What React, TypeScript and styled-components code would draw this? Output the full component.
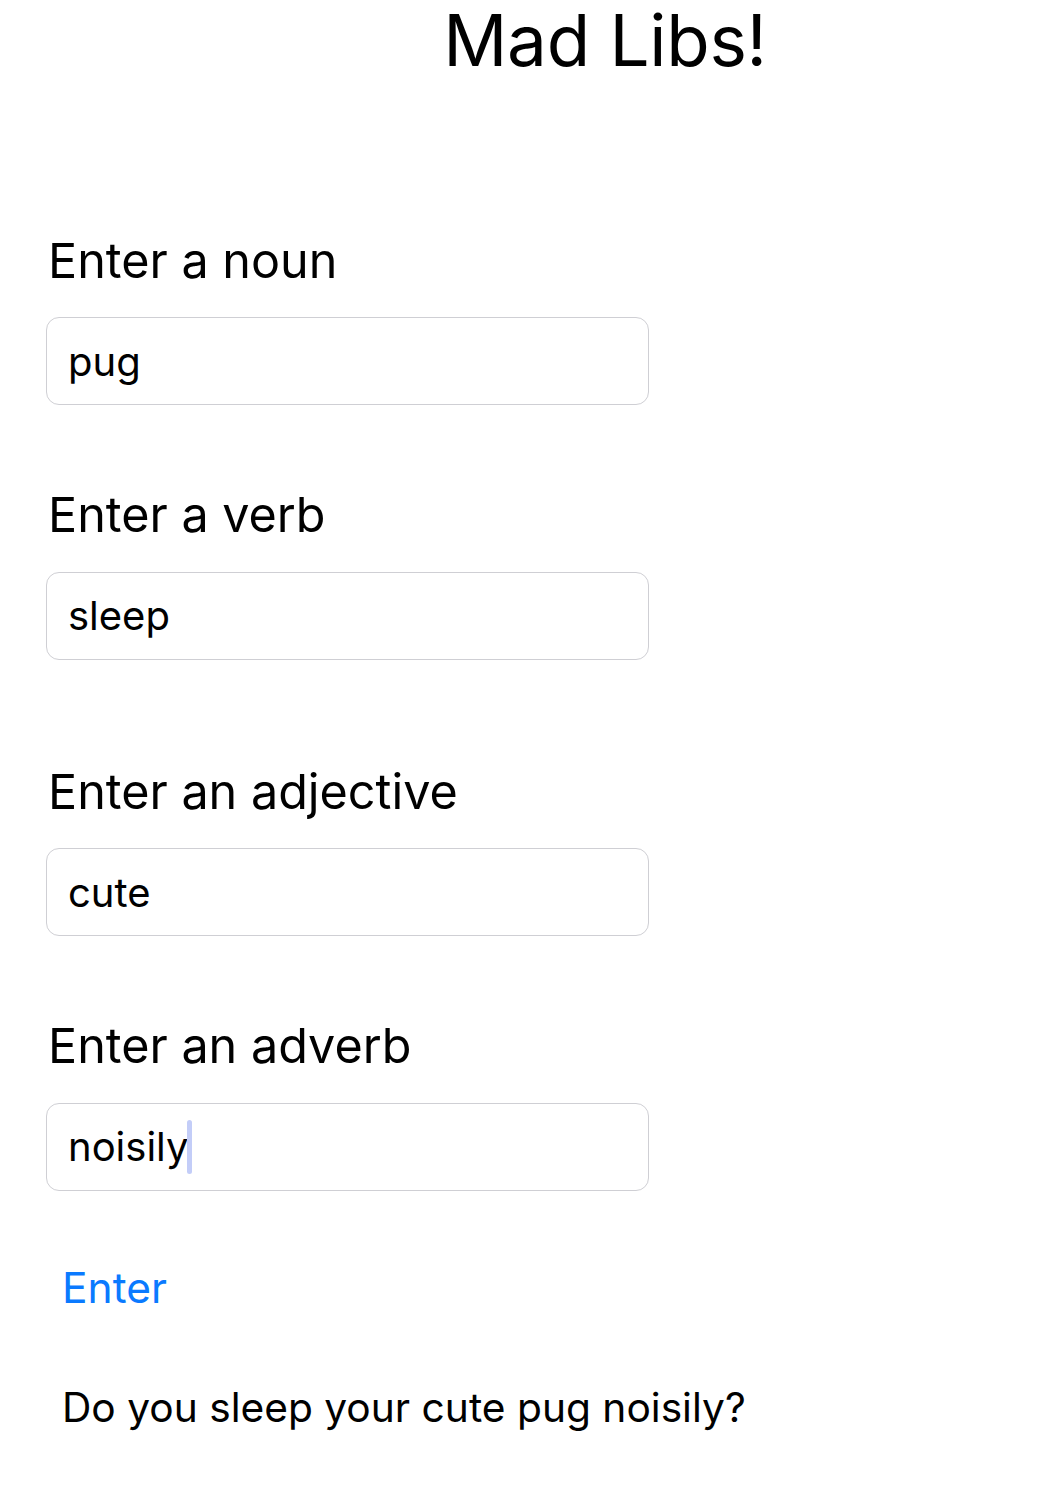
import React, { useState } from "react";
import styled, { createGlobalStyle } from "styled-components";

const GlobalStyle = createGlobalStyle`
  html, body {
    margin: 0;
    padding: 0;
    background: #ffffff;
  }

  body {
    font-family: Inter, "Noto Sans", "Liberation Sans", sans-serif;
    color: #000000;
  }
`;

const Page = styled.div`
  display: flex;
  flex-direction: column;
  width: 1060px;
  min-height: 1508px;
  box-sizing: border-box;
`;

const Title = styled.h1`
  margin: 0;
  padding-left: 150px;
  font-size: 71px;
  font-weight: 400;
  line-height: 1.15;
  text-align: center;
  letter-spacing: -0.3px;
`;

const Form = styled.div`
  display: flex;
  flex-direction: column;
  padding: 0 0 0 46px;
  margin-top: 155px;
`;

const Field = styled.div<{ $spaceAbove: number }>`
  display: flex;
  flex-direction: column;
  gap: 32px;
  margin-top: ${(p) => p.$spaceAbove}px;
`;

const Label = styled.label`
  font-size: 48.5px;
  line-height: 1;
  padding-left: 2px;
`;

const InputBox = styled.div`
  display: flex;
  align-items: center;
  width: 603px;
  height: 88px;
  box-sizing: border-box;
  border: 1px solid #cfcfd4;
  border-radius: 13px;
  padding: 0 21px;
`;

const TextInput = styled.input`
  border: none;
  outline: none;
  padding: 0;
  margin: 0;
  width: 100%;
  background: transparent;
  font-family: inherit;
  font-size: 40px;
  color: #000000;
  caret-color: transparent;
`;

const Caret = styled.span`
  display: inline-block;
  width: 5px;
  height: 54px;
  border-radius: 3px;
  background: #c3cdf8;
  margin-left: -1px;
`;

const TypedText = styled.span`
  font-size: 40px;
  white-space: pre;
`;

const EnterButton = styled.button`
  align-self: flex-start;
  margin: 76px 0 0 62px;
  padding: 0;
  border: none;
  background: none;
  font-family: inherit;
  font-size: 42.5px;
  line-height: 1;
  color: #0a7aff;
  cursor: pointer;
`;

const Result = styled.p`
  margin: 79px 0 0 62px;
  font-size: 40.7px;
  line-height: 1;
`;

type Word = "noun" | "verb" | "adjective" | "adverb";

const fields: { key: Word; label: string; space: number }[] = [
  { key: "noun", label: "Enter a noun", space: 0 },
  { key: "verb", label: "Enter a verb", space: 86 },
  { key: "adjective", label: "Enter an adjective", space: 108 },
  { key: "adverb", label: "Enter an adverb", space: 86 },
];

const App: React.FC = () => {
  const [words, setWords] = useState<Record<Word, string>>({
    noun: "pug",
    verb: "sleep",
    adjective: "cute",
    adverb: "noisily",
  });
  const [story, setStory] = useState("Do you sleep your cute pug noisily?");

  const makeStory = () =>
    setStory(`Do you ${words.verb} your ${words.adjective} ${words.noun} ${words.adverb}?`);

  return (
    <>
      <GlobalStyle />
      <Page>
        <Title>Mad Libs!</Title>
        <Form>
          {fields.map((f) => (
            <Field key={f.key} $spaceAbove={f.space}>
              <Label>{f.label}</Label>
              <InputBox>
                {f.key === "adverb" ? (
                  <>
                    <TypedText>{words.adverb}</TypedText>
                    <Caret />
                  </>
                ) : (
                  <TextInput
                    value={words[f.key]}
                    onChange={(e) => setWords({ ...words, [f.key]: e.target.value })}
                  />
                )}
              </InputBox>
            </Field>
          ))}
        </Form>
        <EnterButton onClick={makeStory}>Enter</EnterButton>
        <Result>{story}</Result>
      </Page>
    </>
  );
};

export default App;
